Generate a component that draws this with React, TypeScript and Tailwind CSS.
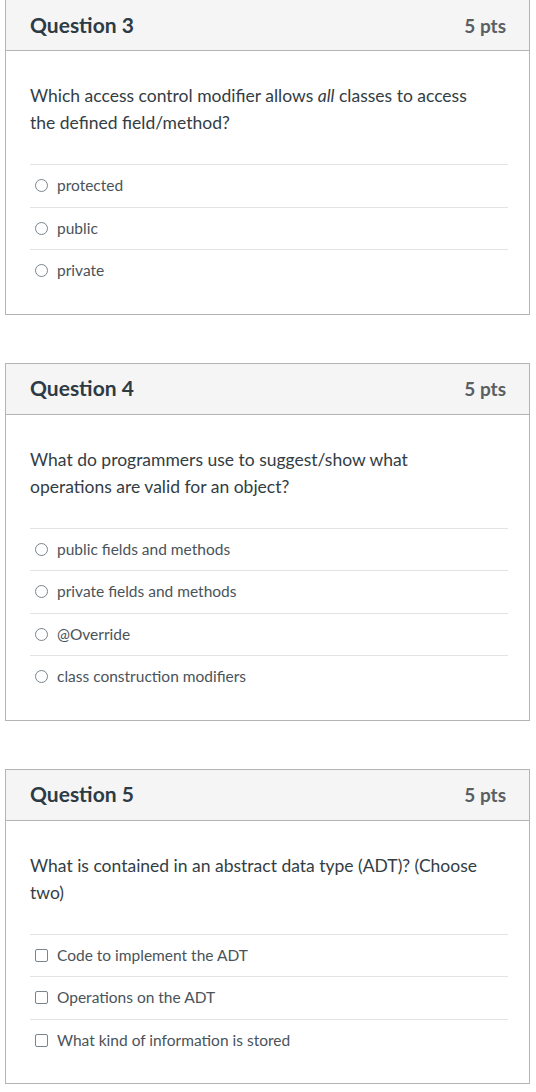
import React from 'react';

type Question = {
  id: number;
  prompt: React.ReactNode;
  answers: string[];
  multi?: boolean;
};

const questions: Question[] = [
  {
    id: 3,
    prompt: (
      <>
        Which access control modifier allows <em>all</em> classes to access
        <br />
        the defined field/method?
      </>
    ),
    answers: ['protected', 'public', 'private'],
  },
  {
    id: 4,
    prompt: (
      <>
        What do programmers use to suggest/show what
        <br />
        operations are valid for an object?
      </>
    ),
    answers: ['public fields and methods', 'private fields and methods', '@Override', 'class construction modifiers'],
  },
  {
    id: 5,
    prompt: (
      <>
        What is contained in an abstract data type (ADT)? (Choose
        <br />
        two)
      </>
    ),
    answers: ['Code to implement the ADT', 'Operations on the ADT', 'What kind of information is stored'],
    multi: true,
  },
];

function Marker({ multi }: { multi?: boolean }) {
  if (multi) {
    return <span className="block w-[13px] h-[13px] rounded-[2px] border border-[#7a848b] bg-white shrink-0" />;
  }
  return <span className="block w-[13px] h-[13px] rounded-full border border-[#7a848b] bg-white shrink-0" />;
}

function QuestionCard({ q, first }: { q: Question; first?: boolean }) {
  return (
    <div className={`border border-[#b4b4b4] bg-white ${first ? 'mt-[-1px]' : 'mt-[48px]'}`}>
      <div className="flex items-center justify-between h-[51px] pl-6 pr-[23px] bg-[#f5f5f5] border-b border-[#b4b4b4]">
        <h2 className="text-[21px] font-bold text-[#2d3b45] leading-none pb-[2px]">Question {q.id}</h2>
        <span className="text-[19px] font-bold text-[#5a5f63] leading-none">5 pts</span>
      </div>
      <div className="pl-6 pr-[21px] pt-[31px] pb-[22px]">
        <p className="text-[17.5px] leading-[27px] text-[#333d44] whitespace-nowrap">{q.prompt}</p>
        <div className="mt-[28px]">
          {q.answers.map((a) => (
            <div key={a} className="flex items-center gap-[9px] h-[42.5px] pl-[5px] border-t border-[#e3e3e3]">
              <Marker multi={q.multi} />
              <span className="text-[15.5px] text-[#4a535a]">{a}</span>
            </div>
          ))}
        </div>
      </div>
    </div>
  );
}

export default function App() {
  return (
    <div className="min-h-[1092px] bg-white pl-[5px] pr-[6px] overflow-hidden" style={{ fontFamily: 'Lato, "Noto Sans", sans-serif' }}>
      {questions.map((q, i) => (
        <QuestionCard key={q.id} q={q} first={i === 0} />
      ))}
    </div>
  );
}
